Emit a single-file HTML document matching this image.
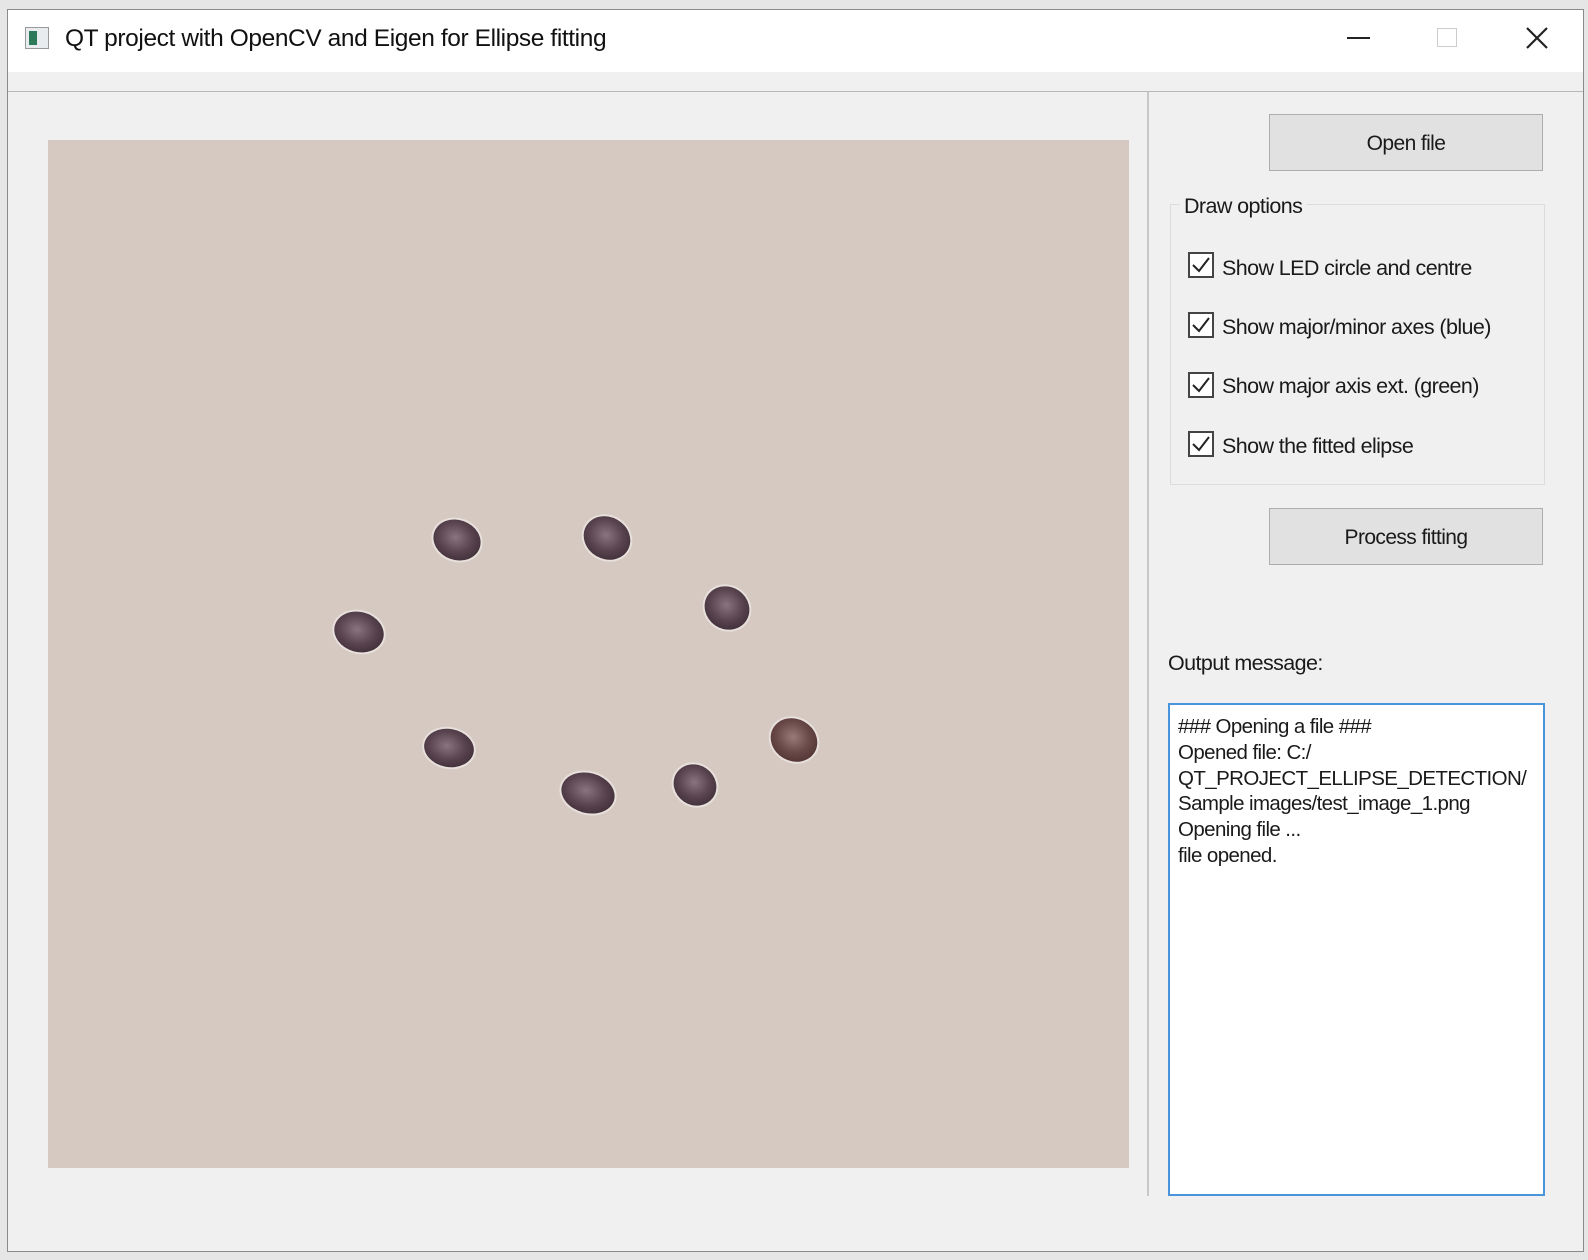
<!DOCTYPE html>
<html><head><meta charset="utf-8"><style>
*{margin:0;padding:0;box-sizing:border-box}
body{width:1588px;height:1260px;background:#e6e6e6;position:relative;overflow:hidden;font-family:"Liberation Sans",sans-serif;color:#1a1a1a}
.a{position:absolute}
.win{left:7px;top:9px;width:1577px;height:1243px;background:#f0f0f0;border:1px solid #8a8a8a}
.title{left:8px;top:10px;width:1575px;height:62px;background:#fff}
.btn{background:#e1e1e1;border:1px solid #adadad;font-size:21px;text-align:center;letter-spacing:-0.6px}
.cb{width:26px;height:26px;border:2px solid #444;background:#fff}
.lbl{font-size:21.5px;letter-spacing:-0.6px;white-space:nowrap}
.dot{border-radius:50%;background:radial-gradient(ellipse at 45% 45%,#8a7480 0%,#5a4550 45%,#3e2d36 80%,#6e5d62 100%);box-shadow:0 0 0 2px #e8e0dc}
</style></head><body>
<div class="a win"></div>
<div class="a title"></div>
<div class="a" style="left:8px;top:91px;width:1575px;height:1px;background:#b8b8b8"></div>
<div class="a" style="left:25px;top:27px;width:24px;height:22px;border:1px solid #999;background:#e8ecef"><div class="a" style="left:3px;top:3px;width:8px;height:14px;background:#2c7a5a"></div></div>
<div class="a" style="left:65px;top:25px;font-size:24.5px;letter-spacing:-0.4px;color:#111">QT project with OpenCV and Eigen for Ellipse fitting</div>
<div class="a" style="left:1347px;top:37px;width:23px;height:2px;background:#222"></div>
<div class="a" style="left:1437px;top:28px;width:20px;height:19px;border:1px solid #ccc"></div>
<svg class="a" style="left:1524px;top:25px" width="26" height="26"><path d="M3 3L23 23M23 3L3 23" stroke="#222" stroke-width="2.2"/></svg>
<div class="a" style="left:1147px;top:92px;width:2px;height:1104px;background:#c8c8c8"></div>
<div class="a" style="left:48px;top:140px;width:1081px;height:1028px;background:#d5c9c2"></div>
<div class="a dot" style="left:433px;top:520px;width:48px;height:40px;transform:rotate(20deg)"></div>
<div class="a dot" style="left:583px;top:517px;width:48px;height:42px;transform:rotate(30deg)"></div>
<div class="a dot" style="left:334px;top:612px;width:50px;height:40px;transform:rotate(15deg)"></div>
<div class="a dot" style="left:704px;top:587px;width:46px;height:42px;transform:rotate(35deg)"></div>
<div class="a dot" style="left:424px;top:729px;width:50px;height:38px;transform:rotate(10deg)"></div>
<div class="a dot" style="left:770px;top:719px;width:48px;height:42px;transform:rotate(30deg);background:radial-gradient(ellipse at 45% 45%,#9a7a78 0%,#6a4a48 45%,#4e3232 80%,#7a6060 100%)"></div>
<div class="a dot" style="left:561px;top:773px;width:54px;height:40px;transform:rotate(15deg)"></div>
<div class="a dot" style="left:673px;top:765px;width:44px;height:40px;transform:rotate(35deg)"></div>
<div class="a btn" style="left:1269px;top:114px;width:274px;height:57px;line-height:57px">Open file</div>
<div class="a" style="left:1170px;top:204px;width:375px;height:281px;border:1px solid #dcdcdc"></div>
<div class="a lbl" style="left:1180px;top:194px;background:#f0f0f0;padding:0 4px">Draw options</div>
<div class="a cb" style="left:1188px;top:252px"></div><svg class="a" style="left:1190px;top:254px" width="22" height="22"><path d="M3 11L9 17L19 4" stroke="#222" stroke-width="2" fill="none"/></svg><div class="a lbl" style="left:1222px;top:256px">Show LED circle and centre</div>
<div class="a cb" style="left:1188px;top:312px"></div><svg class="a" style="left:1190px;top:314px" width="22" height="22"><path d="M3 11L9 17L19 4" stroke="#222" stroke-width="2" fill="none"/></svg><div class="a lbl" style="left:1222px;top:315px">Show major/minor axes (blue)</div>
<div class="a cb" style="left:1188px;top:372px"></div><svg class="a" style="left:1190px;top:374px" width="22" height="22"><path d="M3 11L9 17L19 4" stroke="#222" stroke-width="2" fill="none"/></svg><div class="a lbl" style="left:1222px;top:374px">Show major axis ext. (green)</div>
<div class="a cb" style="left:1188px;top:431px"></div><svg class="a" style="left:1190px;top:433px" width="22" height="22"><path d="M3 11L9 17L19 4" stroke="#222" stroke-width="2" fill="none"/></svg><div class="a lbl" style="left:1222px;top:434px">Show the fitted elipse</div>
<div class="a btn" style="left:1269px;top:508px;width:274px;height:57px;line-height:57px">Process fitting</div>
<div class="a lbl" style="left:1168px;top:651px">Output message:</div>
<div class="a" style="left:1168px;top:703px;width:377px;height:493px;background:#fff;border:2px solid #4a94dc"></div>
<div class="a lbl" style="left:1178px;top:714px;line-height:25.8px;font-size:20.5px">### Opening a file ###<br>Opened file: C:/<br>QT_PROJECT_ELLIPSE_DETECTION/<br>Sample images/test_image_1.png<br>Opening file ...<br>file opened.</div>
</body></html>
